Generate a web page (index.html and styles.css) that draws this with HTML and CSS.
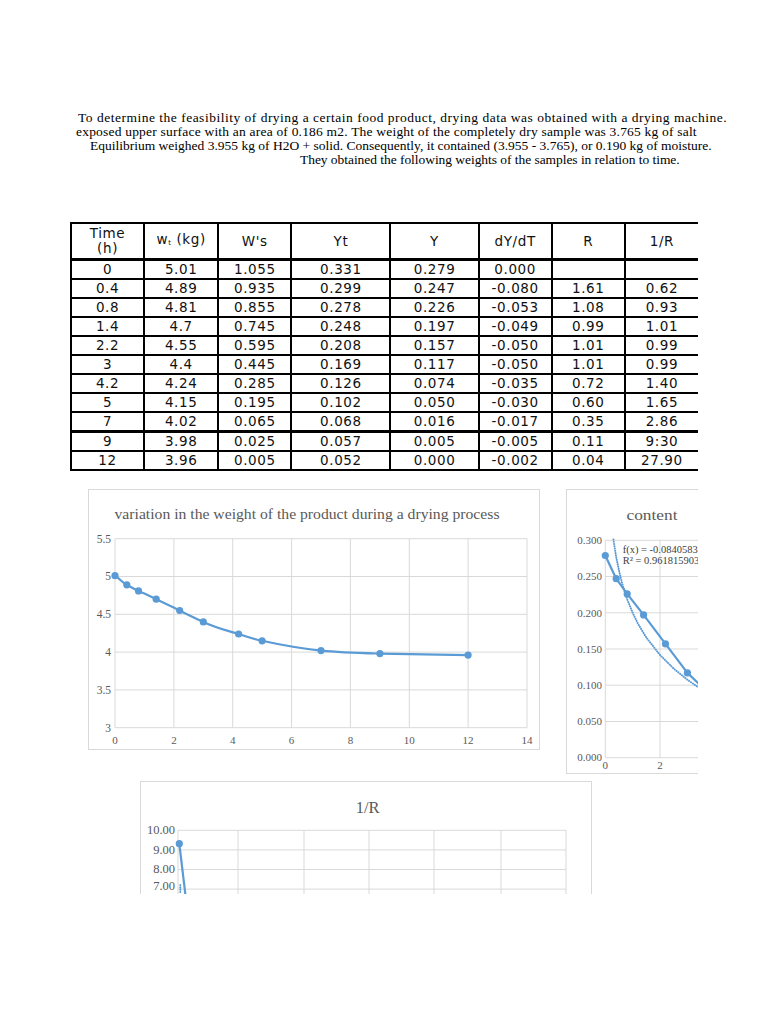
FILE: index.html
```html
<!DOCTYPE html>
<html lang="en">
<head>
<meta charset="UTF-8">
<title>Drying data</title>
<link rel="stylesheet" href="styles.css">
</head>
<body>
<div class="intro">
  <div class="line l1">To determine the feasibility of drying a certain food product, drying data was obtained with a drying machine.</div>
  <div class="line l2">exposed upper surface with an area of 0.186 m2. The weight of the completely dry sample was 3.765 kg of salt</div>
  <div class="line l3">Equilibrium weighed 3.955 kg of H2O + solid. Consequently, it contained (3.955 - 3.765), or 0.190 kg of moisture.</div>
  <div class="line l4">They obtained the following weights of the samples in relation to time.</div>
</div>

<table class="data">
  <colgroup>
    <col style="width:73px"><col style="width:74px"><col style="width:73px"><col style="width:99px">
    <col style="width:88px"><col style="width:73px"><col style="width:73px"><col style="width:73px">
  </colgroup>
  <tr><th>Time<br>(h)</th><th>w<sub>t</sub> (kg)</th><th>W's</th><th>Yt</th><th>Y</th><th>dY/dT</th><th>R</th><th>1/R</th></tr>
  <tr><td>0</td><td>5.01</td><td>1.055</td><td>0.331</td><td>0.279</td><td>0.000</td><td></td><td></td></tr>
  <tr><td>0.4</td><td>4.89</td><td>0.935</td><td>0.299</td><td>0.247</td><td>-0.080</td><td>1.61</td><td>0.62</td></tr>
  <tr><td>0.8</td><td>4.81</td><td>0.855</td><td>0.278</td><td>0.226</td><td>-0.053</td><td>1.08</td><td>0.93</td></tr>
  <tr><td>1.4</td><td>4.7</td><td>0.745</td><td>0.248</td><td>0.197</td><td>-0.049</td><td>0.99</td><td>1.01</td></tr>
  <tr><td>2.2</td><td>4.55</td><td>0.595</td><td>0.208</td><td>0.157</td><td>-0.050</td><td>1.01</td><td>0.99</td></tr>
  <tr><td>3</td><td>4.4</td><td>0.445</td><td>0.169</td><td>0.117</td><td>-0.050</td><td>1.01</td><td>0.99</td></tr>
  <tr><td>4.2</td><td>4.24</td><td>0.285</td><td>0.126</td><td>0.074</td><td>-0.035</td><td>0.72</td><td>1.40</td></tr>
  <tr><td>5</td><td>4.15</td><td>0.195</td><td>0.102</td><td>0.050</td><td>-0.030</td><td>0.60</td><td>1.65</td></tr>
  <tr class="thick"><td>7</td><td>4.02</td><td>0.065</td><td>0.068</td><td>0.016</td><td>-0.017</td><td>0.35</td><td>2.86</td></tr>
  <tr><td>9</td><td>3.98</td><td>0.025</td><td>0.057</td><td>0.005</td><td>-0.005</td><td>0.11</td><td>9:30</td></tr>
  <tr><td>12</td><td>3.96</td><td>0.005</td><td>0.052</td><td>0.000</td><td>-0.002</td><td>0.04</td><td>27.90</td></tr>
</table>

<div class="charts">
  <div class="chart weight">
    <svg width="452" height="261" viewBox="0 0 452 261">
      <text class="title" x="218" y="29" textLength="385" lengthAdjust="spacingAndGlyphs">variation in the weight of the product during a drying process</text>
      <g class="grid">
        <line x1="26" y1="48.7" x2="438" y2="48.7"/>
        <line x1="26" y1="86.5" x2="438" y2="86.5"/>
        <line x1="26" y1="124.3" x2="438" y2="124.3"/>
        <line x1="26" y1="162.1" x2="438" y2="162.1"/>
        <line x1="26" y1="199.9" x2="438" y2="199.9"/>
        <line x1="26" y1="237.7" x2="438" y2="237.7"/>
        <line x1="26" y1="48.7" x2="26" y2="237.7"/>
        <line x1="84.9" y1="48.7" x2="84.9" y2="237.7"/>
        <line x1="143.7" y1="48.7" x2="143.7" y2="237.7"/>
        <line x1="202.6" y1="48.7" x2="202.6" y2="237.7"/>
        <line x1="261.4" y1="48.7" x2="261.4" y2="237.7"/>
        <line x1="320.3" y1="48.7" x2="320.3" y2="237.7"/>
        <line x1="379.1" y1="48.7" x2="379.1" y2="237.7"/>
        <line x1="438" y1="48.7" x2="438" y2="237.7"/>
      </g>
      <g class="ylab">
        <text x="22" y="52.5">5.5</text>
        <text x="22" y="90.3">5</text>
        <text x="22" y="128.1">4.5</text>
        <text x="22" y="165.9">4</text>
        <text x="22" y="203.7">3.5</text>
        <text x="22" y="241.5">3</text>
      </g>
      <g class="xlab">
        <text x="26" y="254">0</text>
        <text x="84.9" y="254">2</text>
        <text x="143.7" y="254">4</text>
        <text x="202.6" y="254">6</text>
        <text x="261.4" y="254">8</text>
        <text x="320.3" y="254">10</text>
        <text x="379.1" y="254">12</text>
        <text x="438" y="254">14</text>
      </g>
      <path class="series" d="M26 85.7 C31 89 33 92.5 37.8 94.8 C42 97 45 99 49.5 100.9 C55 103.5 61 106 67.2 109.2 C75 113 83 116.5 90.7 120.5 C98 124.5 106 128 114.3 131.9 C126 137.5 138 140.5 149.6 144 C157 146.5 165 149 173.1 150.8 C192 155 212 158.5 232 160.6 C252 162.5 271 163 290.9 163.6 C320 164.2 350 164.6 379.1 165.1"/>
      <g class="dots">
        <circle cx="26" cy="85.7" r="3.6"/>
        <circle cx="37.8" cy="94.8" r="3.6"/>
        <circle cx="49.5" cy="100.9" r="3.6"/>
        <circle cx="67.2" cy="109.2" r="3.6"/>
        <circle cx="90.7" cy="120.5" r="3.6"/>
        <circle cx="114.3" cy="131.9" r="3.6"/>
        <circle cx="149.6" cy="144" r="3.6"/>
        <circle cx="173.1" cy="150.8" r="3.6"/>
        <circle cx="232" cy="160.6" r="3.6"/>
        <circle cx="290.9" cy="163.6" r="3.6"/>
        <circle cx="379.1" cy="165.1" r="3.6"/>
      </g>
    </svg>
  </div>

  <div class="chart content">
    <svg width="200" height="284" viewBox="0 0 200 284">
      <text class="title" x="85" y="30" textLength="51" lengthAdjust="spacingAndGlyphs">content</text>
      <g class="grid">
        <line x1="38.3" y1="50.3" x2="200" y2="50.3"/>
        <line x1="38.3" y1="86.5" x2="200" y2="86.5"/>
        <line x1="38.3" y1="122.8" x2="200" y2="122.8"/>
        <line x1="38.3" y1="159" x2="200" y2="159"/>
        <line x1="38.3" y1="195.2" x2="200" y2="195.2"/>
        <line x1="38.3" y1="231.5" x2="200" y2="231.5"/>
        <line x1="38.3" y1="267.7" x2="200" y2="267.7"/>
        <line x1="38.3" y1="50.3" x2="38.3" y2="267.7"/>
        <line x1="93" y1="50.3" x2="93" y2="267.7"/>
        <line x1="147.7" y1="50.3" x2="147.7" y2="267.7"/>
      </g>
      <g class="ylab small">
        <text x="35" y="54">0.300</text>
        <text x="35" y="90.2">0.250</text>
        <text x="35" y="126.5">0.200</text>
        <text x="35" y="162.7">0.150</text>
        <text x="35" y="198.9">0.100</text>
        <text x="35" y="235.2">0.050</text>
        <text x="35" y="271.4">0.000</text>
      </g>
      <g class="xlab">
        <text x="38.3" y="279">0</text>
        <text x="93" y="279">2</text>
      </g>
      <text class="eq" x="55.7" y="63">f(x) = -0.0840583</text>
      <text class="eq" x="55.7" y="74">R² = 0.961815903</text>
      <polyline class="trend" points="46.5,49.4 47.9,58.9 49.2,67 52,80.5 54.7,91.7 57.4,101 60.2,109.2 65.65,122.8 71.1,133.9 79.3,147.5 93,165 106.7,178.6 120.35,189.7 134,199.1 147.7,207.2"/>
      <polyline class="series" points="38.3,65.5 49.2,88.7 60.2,103.9 76.6,124.9 98.5,153.9 120.4,182.9 153.2,214.1"/>
      <g class="dots">
        <circle cx="38.3" cy="65.5" r="3.6"/>
        <circle cx="49.2" cy="88.7" r="3.6"/>
        <circle cx="60.2" cy="103.9" r="3.6"/>
        <circle cx="76.6" cy="124.9" r="3.6"/>
        <circle cx="98.5" cy="153.9" r="3.6"/>
        <circle cx="120.4" cy="182.9" r="3.6"/>
        <circle cx="153.2" cy="214.1" r="3.6"/>
      </g>
    </svg>
  </div>
</div>

<div class="chart inverse">
  <svg width="452" height="140" viewBox="0 0 452 140">
    <text class="title big" x="226.7" y="31">1/R</text>
    <g class="grid">
      <line x1="37" y1="48.3" x2="425" y2="48.3"/>
      <line x1="37" y1="67.9" x2="425" y2="67.9"/>
      <line x1="37" y1="87.5" x2="425" y2="87.5"/>
      <line x1="37" y1="107.1" x2="425" y2="107.1"/>
      <line x1="37" y1="126.7" x2="425" y2="126.7"/>
      <line x1="37" y1="48.3" x2="37" y2="140"/>
      <line x1="97" y1="48.3" x2="97" y2="140"/>
      <line x1="163" y1="48.3" x2="163" y2="140"/>
      <line x1="228" y1="48.3" x2="228" y2="140"/>
      <line x1="293" y1="48.3" x2="293" y2="140"/>
      <line x1="360" y1="48.3" x2="360" y2="140"/>
      <line x1="425" y1="48.3" x2="425" y2="140"/>
    </g>
    <g class="ylab wide">
      <text x="34" y="52.2">10.00</text>
      <text x="34" y="71.8">9.00</text>
      <text x="34" y="91.4">8.00</text>
      <text x="34" y="108">7.00</text>
    </g>
    <line class="trend" x1="39.3" y1="103" x2="39.3" y2="112"/>
    <line class="series" x1="38.3" y1="61.7" x2="44.8" y2="116"/>
    <circle class="dot" cx="38.3" cy="61.7" r="3.6"/>
  </svg>
</div>
</body>
</html>
```

FILE: styles.css
```css
body{margin:0;padding:0;background:#fff;color:#000;}

.intro{
  padding-top:111px;
  font-family:"Liberation Serif","Times New Roman",serif;
  font-size:13.5px;
  line-height:14px;
  white-space:nowrap;
}
.l1{padding-left:78px;letter-spacing:0.5px;}
.l2{padding-left:76px;letter-spacing:0.2px;}
.l3{padding-left:90px;}
.l4{padding-left:300px;letter-spacing:-0.05px;}

.data{
  margin:55px 0 0 70px;
  width:628px;
  border-collapse:collapse;
  table-layout:fixed;
  font-family:"DejaVu Sans",Verdana,sans-serif;
  font-size:13.5px;
  letter-spacing:0.6px;
  color:#111;
}
.data th,
.data td{
  border:2px solid #000;
  padding:0;
  height:17px;
  line-height:15px;
  text-align:center;
  font-weight:normal;
}
.data th{
  height:34px;
  border-bottom-width:3px;
}
.data th:last-child,
.data td:last-child{border-right:none;}
.data sub{font-size:7px;vertical-align:-1px;}
.data .thick td{border-bottom-width:3px;}

.charts{
  display:flex;
  margin-top:18px;
}
.chart{
  border:1px solid #d9d9d9;
  background:#fff;
  overflow:hidden;
}
.chart svg{display:block;}
.weight{
  margin-left:88px;
  width:450px;
  height:259px;
  align-self:flex-start;
}
.content{
  margin-left:26px;
  width:131px;
  height:283px;
  border-right:none;
}
.inverse{
  margin:7px 0 0 140px;
  width:450px;
  height:112px;
  border-bottom:none;
}

.chart text{
  font-family:"Liberation Serif","Times New Roman",serif;
  fill:#595959;
}
.chart .title{
  font-size:15.5px;
  text-anchor:middle;
}
.chart .title.big{font-size:16.5px;}
.ylab text{
  font-size:11.5px;
  text-anchor:end;
}
.ylab.small text{font-size:11px;}
.ylab.wide text{font-size:12.5px;}
.xlab text{
  font-size:11px;
  text-anchor:middle;
}
.chart .eq{
  font-size:10.5px;
  fill:#404040;
}
.grid line{
  stroke:#d9d9d9;
  stroke-width:1;
}
.series{
  fill:none;
  stroke:#5b9bd5;
  stroke-width:2.2;
  stroke-linejoin:round;
}
.trend{
  fill:none;
  stroke:#5b9bd5;
  stroke-width:2;
  stroke-dasharray:0.1 2.2;
  stroke-linecap:round;
}
.dots circle,
.dot{
  fill:#5b9bd5;
}
```
